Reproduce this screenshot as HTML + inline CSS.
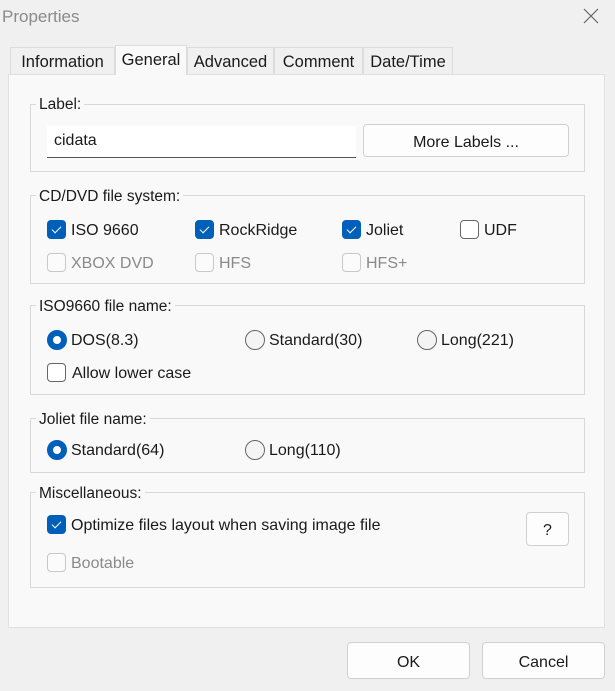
<!DOCTYPE html>
<html><head><meta charset="utf-8"><style>
body{margin:0;width:615px;height:691px;background:#f0f0f0;font-family:"Liberation Sans",sans-serif;font-size:16px;color:#1a1a1a;position:relative;overflow:hidden}
.a{position:absolute;white-space:nowrap}
.tab{position:absolute;top:47px;height:27px;border:1px solid #dcdcdc;border-bottom:none;background:#f0f0f0;box-sizing:border-box;text-align:center;line-height:29px;font-size:16.5px}
.panel{position:absolute;left:8px;top:74px;width:597px;height:554px;background:#f9f9f9;border:1px solid #e0e0e0;box-sizing:border-box}
.grp{position:absolute;left:30px;width:555px;border:1px solid #d8d8d8;box-sizing:border-box}
.gl{position:absolute;left:36px;background:#f9f9f9;padding:0 3px;font-size:15.5px}
.cb{position:absolute;width:19px;height:19px;border-radius:4px;box-sizing:border-box;border:1px solid #666;background:#fff}
.cb.on{background:#005fb8;border-color:#005fb8}
.cb.on::after{content:"";position:absolute;left:6px;top:3px;width:4px;height:8px;border:solid #fff;border-width:0 1.3px 1.3px 0;transform:rotate(45deg)}
.cb.dis{border-color:#c8c8c8;background:#fbfbfb}
.rb{position:absolute;width:20px;height:20px;border-radius:50%;box-sizing:border-box;border:1px solid #666;background:#f4f4f4}
.rb.on{border:6px solid #005fb8;background:#fff}
.dis{color:#8a8a8a}
.btn{position:absolute;background:#fdfdfd;border:1px solid #d0d0d0;border-radius:4px;box-sizing:border-box;text-align:center;font-size:16px}
</style></head><body>
<div class="a" style="left:2px;top:7px;font-size:17px;color:#8a8a8a">Properties</div>
<svg class="a" style="left:583px;top:8px" width="16" height="16"><path d="M1 1L15 15M15 1L1 15" stroke="#666" stroke-width="1.2"/></svg>
<div class="panel"></div>
<div class="tab" style="left:10px;width:105px">Information</div>
<div class="tab" style="left:115px;width:72px;top:45px;height:30px;background:#f9f9f9;line-height:29px">General</div>
<div class="tab" style="left:187px;width:87px">Advanced</div>
<div class="tab" style="left:274px;width:89px">Comment</div>
<div class="tab" style="left:363px;width:90px">Date/Time</div>

<div class="grp" style="top:104px;height:68px"></div>
<div class="gl" style="top:96px">Label:</div>
<div class="a" style="left:47px;top:126px;width:309px;height:32px;background:#fff;border-bottom:1px solid #555;box-sizing:border-box;padding:6px 7px">cidata</div>
<div class="btn" style="left:363px;top:124px;width:206px;height:33px;line-height:35px">More Labels ...</div>

<div class="grp" style="top:195px;height:89px"></div>
<div class="gl" style="top:188px">CD/DVD file system:</div>
<div class="cb on" style="left:47px;top:220px"></div><div class="a" style="left:71px;top:222px">ISO 9660</div>
<div class="cb on" style="left:195px;top:220px"></div><div class="a" style="left:219px;top:222px">RockRidge</div>
<div class="cb on" style="left:342px;top:220px"></div><div class="a" style="left:366px;top:222px">Joliet</div>
<div class="cb" style="left:460px;top:220px"></div><div class="a" style="left:484px;top:222px">UDF</div>
<div class="cb dis" style="left:47px;top:253px"></div><div class="a dis" style="left:71px;top:255px">XBOX DVD</div>
<div class="cb dis" style="left:195px;top:253px"></div><div class="a dis" style="left:219px;top:255px">HFS</div>
<div class="cb dis" style="left:342px;top:253px"></div><div class="a dis" style="left:366px;top:255px">HFS+</div>

<div class="grp" style="top:305px;height:90px"></div>
<div class="gl" style="top:298px">ISO9660 file name:</div>
<div class="rb on" style="left:47px;top:330px"></div><div class="a" style="left:71px;top:332px">DOS(8.3)</div>
<div class="rb" style="left:245px;top:330px"></div><div class="a" style="left:269px;top:332px">Standard(30)</div>
<div class="rb" style="left:417px;top:330px"></div><div class="a" style="left:441px;top:332px">Long(221)</div>
<div class="cb" style="left:47px;top:363px"></div><div class="a" style="left:72px;top:365px">Allow lower case</div>

<div class="grp" style="top:418px;height:55px"></div>
<div class="gl" style="top:411px">Joliet file name:</div>
<div class="rb on" style="left:47px;top:440px"></div><div class="a" style="left:71px;top:442px">Standard(64)</div>
<div class="rb" style="left:245px;top:440px"></div><div class="a" style="left:269px;top:442px">Long(110)</div>

<div class="grp" style="top:492px;height:96px"></div>
<div class="gl" style="top:485px">Miscellaneous:</div>
<div class="cb on" style="left:47px;top:515px"></div><div class="a" style="left:71px;top:517px">Optimize files layout when saving image file</div>
<div class="btn" style="left:526px;top:512px;width:43px;height:34px;line-height:36px">?</div>
<div class="cb dis" style="left:47px;top:553px"></div><div class="a dis" style="left:71px;top:555px">Bootable</div>

<div class="btn" style="left:347px;top:642px;width:123px;height:37px;line-height:39px">OK</div>
<div class="btn" style="left:482px;top:642px;width:123px;height:37px;line-height:39px">Cancel</div>
</body></html>
